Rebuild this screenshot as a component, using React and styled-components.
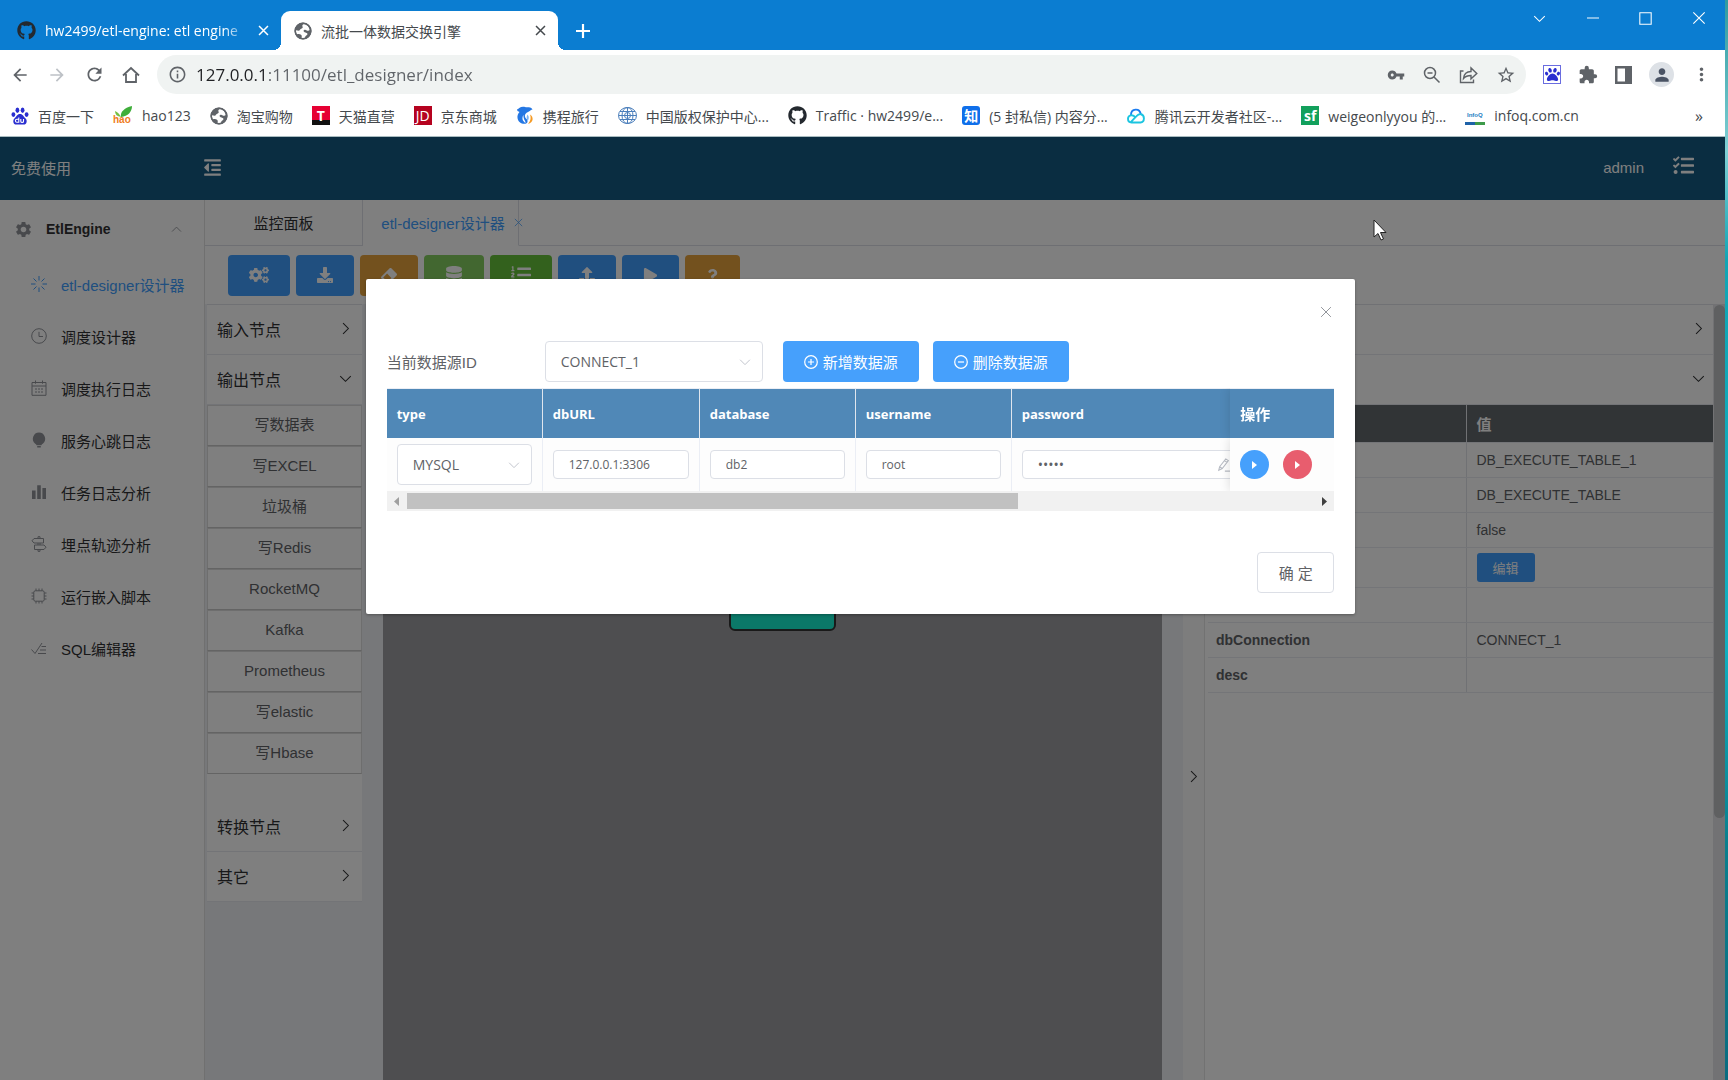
/* eslint-disable react/prop-types */
import { useState } from "react";
import styled, { createGlobalStyle } from "styled-components";
import {
  FaCogs,
  FaDatabase,
  FaDownload,
  FaEraser,
  FaGithub,
  FaListOl,
  FaOutdent,
  FaPaw,
  FaPlay,
  FaQuestion,
  FaTasks,
  FaUpload,
} from "react-icons/fa";
import {
  MdArrowBack,
  MdArrowForward,
  MdExtension,
  MdInfoOutline,
  MdMoreVert,
  MdPerson,
  MdRefresh,
  MdSettings,
  MdStarBorder,
  MdVpnKey,
} from "react-icons/md";

const GlobalStyle = createGlobalStyle`
  * {
    box-sizing: border-box;
  }
  body {
    margin: 0;
    font-family: "Liberation Sans", "Noto Sans CJK SC", sans-serif;
    font-size: 14px;
    color: #303133;
  }
  button, input, select {
    font: inherit;
    color: inherit;
    margin: 0;
  }
  button {
    border: none;
    padding: 0;
    background: none;
    cursor: pointer;
  }
  a {
    color: inherit;
    text-decoration: none;
  }
  svg {
    display: block;
    flex: none;
  }
`;

const uiFont = `"Open Sans", "Noto Sans CJK SC", sans-serif`;

const Desktop = styled.div`
  min-height: 100vh;
  display: flex;
  background: linear-gradient(
    #2f9aa0 0%,
    #7fcfd4 14%,
    #12a5b4 24%,
    #0fb0c0 60%,
    #0a7f8d 78%,
    #0b6c80 100%
  );
`;

const Window = styled.div`
  flex: 1;
  min-width: 0;
  margin-right: 3px;
  display: flex;
  flex-direction: column;
  background: #fff;
`;

/* browser chrome */

const TabStrip = styled.div`
  display: flex;
  align-items: flex-end;
  height: 50px;
  background: #0b7dd1;
  font-family: ${uiFont};
  color: #fff;
`;

const BrowserTab = styled.div`
  position: relative;
  display: flex;
  align-items: center;
  gap: 9px;
  width: ${(p) => (p.$active ? "277px" : "281px")};
  height: 39px;
  padding: 0 12px 0 ${(p) => (p.$active ? "13px" : "17px")};
  border-radius: 9px 9px 0 0;
  background: ${(p) => (p.$active ? "#fff" : "transparent")};
  color: ${(p) => (p.$active ? "#45494d" : "#fff")};
  &::before,
  &::after {
    content: ${(p) => (p.$active ? '""' : "none")};
    position: absolute;
    bottom: 0;
    width: 8px;
    height: 8px;
  }
  &::before {
    right: 100%;
    background: radial-gradient(circle at 0 0, transparent 8px, #fff 8px);
  }
  &::after {
    left: 100%;
    background: radial-gradient(circle at 100% 0, transparent 8px, #fff 8px);
  }
`;

const TabTitle = styled.span`
  flex: 1;
  overflow: hidden;
  white-space: nowrap;
  ${(p) =>
    !p.$active &&
    `font-weight: 500;
     mask-image: linear-gradient(90deg, #000 88%, transparent);`}
`;

const PlainButton = styled.button`
  display: grid;
  place-items: center;
`;

const NewTab = styled(PlainButton)`
  width: 50px;
  height: 39px;
`;

const WindowButtons = styled.div`
  display: flex;
  align-self: flex-start;
  margin-left: auto;
  button {
    width: 53px;
    height: 36px;
  }
`;

const AddressRow = styled.div`
  display: flex;
  align-items: center;
  height: 49px;
  padding: 0 13px 0 10px;
  gap: 17px;
  color: #5f6368;
`;

const NavButtons = styled.div`
  display: flex;
  gap: 17px;
`;

const Omnibox = styled.div`
  flex: 1;
  display: flex;
  align-items: center;
  gap: 18px;
  height: 39px;
  padding: 0 10px 0 11px;
  border-radius: 20px;
  background: #f0f3f2;
`;

/* host part is darker than the path */
const UrlInput = styled.input`
  flex: 1;
  min-width: 0;
  margin-left: -9px;
  border: none;
  outline: none;
  padding: 0;
  background: linear-gradient(90deg, #202124 72px, #5f6368 72px);
  background-clip: text;
  color: transparent;
  caret-color: #202124;
  font-family: ${uiFont};
  font-size: 17px;
`;

const ExtensionIcon = styled.span`
  display: grid;
  place-items: center;
  width: 18px;
  height: 19px;
  border: 1px solid #6a6de0;
  background: #fff;
  color: #2a2fd0;
`;

const Avatar = styled.span`
  display: grid;
  place-items: center;
  width: 25px;
  height: 25px;
  border-radius: 50%;
  background: #dde1e6;
  color: #4a5364;
`;

const BookmarkBar = styled.nav`
  display: flex;
  align-items: center;
  height: 38px;
  padding: 0 22px 4px 11px;
  gap: 19px;
  border-bottom: 1px solid #a9bcc0;
  font-family: ${uiFont};
  color: #45494d;
  white-space: nowrap;
`;

const Bookmark = styled.a`
  display: flex;
  align-items: center;
  gap: 9px;
`;

const Badge = styled.span`
  display: grid;
  place-items: center;
  width: 18px;
  height: 19px;
  line-height: 19px;
  font-size: 14px;
  font-weight: ${(p) => p.$weight || 700};
  border-radius: ${(p) => p.$radius || 0}px;
  background: ${(p) => p.$bg};
  color: #fff;
`;

const More = styled.span`
  margin-left: auto;
  font-size: 16px;
`;

/* application */

const AppArea = styled.div`
  position: relative;
  flex: 1;
  display: flex;
  flex-direction: column;
`;

const AppHeader = styled.header`
  display: flex;
  align-items: center;
  height: 63px;
  padding: 0 31px 2px 11px;
  background: #145b83;
  color: #fff;
`;

const Brand = styled.span`
  width: 192px;
  font-size: 15px;
`;

const UserName = styled.span`
  margin-left: auto;
  margin-right: 29px;
  font-size: 15px;
`;

const TaskButton = styled(PlainButton)`
  align-self: flex-start;
  height: 57px;
`;

const AppBody = styled.div`
  flex: 1;
  display: flex;
`;

const Sidebar = styled.nav`
  flex: none;
  width: 205px;
  border-right: 1px solid #e0e0e0;
`;

const MenuTitle = styled.button`
  display: flex;
  align-items: center;
  gap: 13px;
  width: 100%;
  height: 58px;
  padding: 0 22px 0 14px;
  font-weight: 700;
  svg {
    color: #909399;
  }
  svg:last-child {
    margin-left: auto;
  }
`;

const MenuItem = styled.a`
  display: flex;
  align-items: center;
  gap: 14px;
  height: 52px;
  padding-left: 31px;
  font-size: 15px;
  color: ${(p) => (p.$active ? "#409eff" : "#303133")};
  svg {
    color: ${(p) => (p.$active ? "#409eff" : "#909399")};
  }
`;

const Main = styled.main`
  flex: 1;
  min-width: 0;
  display: flex;
  flex-direction: column;
`;

const PageTabs = styled.div`
  display: flex;
  height: 46px;
  border-bottom: 1px solid #dcdfe6;
`;

const PageTab = styled.button`
  display: flex;
  align-items: center;
  justify-content: center;
  width: ${(p) => (p.$active ? "156px" : "158px")};
  height: 46px;
  border-right: 1px solid #dcdfe6;
  border-bottom: 1px solid ${(p) => (p.$active ? "#fff" : "#dcdfe6")};
  font-size: 15px;
  white-space: nowrap;
  color: ${(p) => (p.$active ? "#409eff" : "#303133")};
`;

const ActiveTabInner = styled.span`
  display: flex;
  align-items: center;
  gap: 9px;
  margin-right: -23px;
`;

const Toolbar = styled.div`
  display: flex;
  align-items: center;
  gap: 6px;
  height: 58px;
  padding: 0 23px;
`;

const ToolButton = styled.button`
  display: grid;
  place-items: center;
  height: 41px;
  padding: 0 21px;
  border-radius: 4px;
  background: ${(p) => p.$bg};
  color: #fff;
`;

const Workspace = styled.div`
  flex: 1;
  display: flex;
  padding-left: 2px;
  background: #eff1f5;
`;

const NodePanel = styled.section`
  flex: none;
  align-self: flex-start;
  width: 155px;
  background: #fff;
  border-top: 1px solid #e0e3e9;
`;

const FoldRow = styled.button`
  display: flex;
  align-items: center;
  justify-content: space-between;
  width: 100%;
  height: 50px;
  padding: 0 ${(p) => (p.$wide ? "8px" : "10px")} 2px 10px;
  border-bottom: 1px solid #e6e8ee;
  font-size: 16px;
`;

const NodeList = styled.ul`
  margin: 0 0 28px;
  padding: 0;
  list-style: none;
`;

const NodeItem = styled.li`
  height: 41px;
  line-height: 38px;
  border: 1px solid #dcdcdc;
  border-bottom-color: #c8c8c8;
  font-size: 15px;
  text-align: center;
  color: #606266;
`;

const Canvas = styled.div`
  position: relative;
  flex: 1;
  margin: 0 21px;
  background: #9c9da0;
`;

const FlowNode = styled.div`
  position: absolute;
  top: 270px;
  left: 346px;
  width: 107px;
  height: 57px;
  border: 2px solid #333;
  border-radius: 6px;
  background: #16f0d0;
`;

const Collapse = styled.button`
  flex: none;
  width: 21px;
  padding: 168px 0 0 4px;
  background: #fafafa;
`;

const Properties = styled.section`
  flex: none;
  width: 509px;
  padding-left: 3px;
  background: #fff;
  border-left: 1px solid #e4e4e4;
  border-top: 1px solid #e0e3e9;
`;

const PropTable = styled.table`
  width: 100%;
  border-collapse: collapse;
  table-layout: fixed;
  th,
  td {
    height: 35px;
    padding: 0 10px;
    text-align: left;
    border-bottom: 1px solid #e9ebf0;
  }
  th:first-child {
    width: 258px;
    padding-left: 8px;
    border-right: 1px solid #e0e3e9;
  }
  td {
    color: #606266;
  }
  tbody th {
    color: #606266;
  }
  thead th {
    height: 37px;
    background: #62686d;
    color: #fff;
    font-size: 15px;
  }
`;

const EditButton = styled.button`
  display: block;
  width: 58px;
  height: 29px;
  margin: 5px 0;
  border-radius: 3px;
  background: #409eff;
  color: #fff;
  font-size: 13px;
`;

const ScrollTrack = styled.div`
  flex: none;
  width: 12px;
  padding: 1px 0 0 1px;
  background: #e4e5e9;
`;

const ScrollThumb = styled.div`
  height: 513px;
  border-radius: 6px;
  background: #bfc0c2;
`;

/* dialog */

const Overlay = styled.div`
  position: absolute;
  inset: 0;
  display: flex;
  justify-content: center;
  align-items: flex-start;
  padding: 142px 4px 0 0;
  background: rgba(0, 0, 0, 0.5);
`;

const Dialog = styled.section`
  width: 57.5%;
  padding: 21px;
  border-radius: 2px;
  background: #fff;
  color: #606266;
  box-shadow: 0 1px 3px rgba(0, 0, 0, 0.3);
`;

const DialogHead = styled.div`
  display: flex;
  justify-content: flex-end;
  align-items: flex-start;
  height: 41px;
  padding: 6px 2px 0 0;
  color: #909399;
`;

const SourceRow = styled.div`
  display: flex;
  align-items: center;
  margin-bottom: 6px;
`;

const SourceLabel = styled.label`
  width: 158px;
  font-size: 15px;
`;

const SelectWrap = styled.span`
  display: grid;
  align-items: center;
  width: ${(p) => p.$width};
  svg {
    grid-area: 1 / 1;
    justify-self: end;
    margin-right: 12px;
    color: #c0c4cc;
    pointer-events: none;
  }
  select {
    grid-area: 1 / 1;
    appearance: none;
    height: 41px;
    padding: 0 15px;
    border: 1px solid #dcdfe6;
    border-radius: 4px;
    background: #fff;
    font-family: ${uiFont};
  }
`;

const PrimaryButton = styled.button`
  display: flex;
  align-items: center;
  gap: 5px;
  height: 41px;
  margin-left: ${(p) => p.$gap};
  padding: 0 21px;
  border-radius: 4px;
  background: #46a0fc;
  color: #fff;
  font-size: 15px;
`;

const TableBox = styled.div`
  overflow: hidden;
`;

const SourceTable = styled.table`
  width: 970px;
  min-width: 100%;
  border-collapse: separate;
  border-spacing: 0;
  table-layout: fixed;
  font-family: ${uiFont};
  th {
    height: 50px;
    padding: 0 10px;
    text-align: left;
    font-size: 13px;
    color: #fff;
    background: #5088b7;
    border-right: 1px solid #dfe6ee;
    border-top: 1px solid #ebeef5;
  }
  td {
    height: 53px;
    padding: 0 10px;
    border-right: 1px solid #ebeef5;
    background: #fdfdfd;
  }
  th:last-child,
  td:last-child {
    position: sticky;
    right: 0;
    border-right: none;
    box-shadow: 0 0 10px rgba(0, 0, 0, 0.14);
    clip-path: inset(0 0 0 -10px);
  }
  th:last-child {
    font-size: 15px;
  }
`;

const Field = styled.input`
  display: block;
  width: 100%;
  height: 29px;
  padding: 0 15px;
  border: 1px solid #dcdfe6;
  border-radius: 4px;
  outline: none;
  background: #fff;
  font-size: ${(p) => (p.type === "password" ? "14px" : "12px")};
  color: #606266;
`;

const PasswordWrap = styled.span`
  display: grid;
  align-items: center;
  input,
  svg {
    grid-area: 1 / 1;
  }
  svg {
    justify-self: end;
    margin-right: 11px;
    color: #b8bcc4;
  }
`;

const RowActions = styled.div`
  display: flex;
  gap: 14px;
`;

const RoundButton = styled.button`
  display: grid;
  place-items: center;
  width: 29px;
  height: 29px;
  border-radius: 50%;
  background: ${(p) => p.$bg};
  color: #fff;
`;

const HScroll = styled.div`
  display: flex;
  align-items: center;
  height: 20px;
  padding: 0 7px;
  background: #f1f1f1;
`;

const HTrack = styled.div`
  flex: 1;
  height: 16px;
  margin: 0 8px;
`;

const HThumb = styled.div`
  width: 67.4%;
  height: 100%;
  background: #c1c1c1;
`;

const DialogFoot = styled.div`
  display: flex;
  justify-content: flex-end;
  margin-top: 41px;
`;

const ConfirmButton = styled.button`
  width: 77px;
  height: 41px;
  border: 1px solid #dcdfe6;
  border-radius: 4px;
  background: #fff;
  font-size: 15px;
`;

const Pointer = styled.svg`
  position: absolute;
  top: 82px;
  left: 1373px;
`;

/* icons */

function Line({ size = 16, box = 16, width = 1, d, children, ...rest }) {
  return (
    <svg
      width={size}
      height={size}
      viewBox={`0 0 ${box} ${box}`}
      fill="none"
      stroke="currentColor"
      strokeWidth={width}
      aria-hidden="true"
      {...rest}
    >
      {d && <path d={d} />}
      {children}
    </svg>
  );
}

const Chevron = ({ dir, size = 13 }) => {
  const paths = {
    right: "M5 1.5 11.5 8 5 14.5",
    down: "M1.5 5 8 11.5 14.5 5",
    up: "M1.5 11 8 4.5 14.5 11",
  };
  return <Line size={size} width={1.3} d={paths[dir]} />;
};

const Cross = ({ size = 12, width = 1.3 }) => (
  <Line size={size} width={width} d="M1.5 1.5l13 13M14.5 1.5l-13 13" />
);

const SpinnerIcon = () => (
  <Line d="M8 0v4.5M8 11.500v4.500M0 8h4.500M11.500 8H16M2.500 2.500l3 3M10.500 10.500l3 3M2.500 13.500l3-3M10.500 5.500l3-3" />
);

const ClockIcon = () => (
  <Line>
    <circle cx="8" cy="8" r="7.3" />
    <path d="M8 3.8V8.5h4" />
  </Line>
);

const CalendarIcon = () => (
  <Line>
    <path d="M1 2.5h14v12.8H1zM1 6h14M4.5.5v3.2M11.5.5v3.2" />
    <path d="M4 9h8M4 12h8" strokeDasharray="2 1" />
  </Line>
);

const BulbIcon = () => (
  <Line stroke="none" fill="currentColor">
    <path d="M8 .5a6.300 6.300 0 0 1 3.800 11.200c-.7.5-1.300.8-1.300 1.500h-5c0-.7-.6-1-1.300-1.500A6.300 6.300 0 0 1 8 .5zM6.200 14h3.600v1.500H6.200z" />
  </Line>
);

const BarsIcon = () => (
  <Line stroke="none" fill="currentColor">
    <path d="M1 6.5h3.6V15H1zM6.200 1.200h3.600V15H6.200zM11.400 4H15v11h-3.600z" />
  </Line>
);

const SignIcon = () => (
  <Line>
    <path d="M7 2.5V.7h2v1.8M7 7v2M9 7v2M7 13.5v1.8h2v-1.8M3 2.5h9.5v4.5H3L1 4.8zM3.5 9H13l2 2.2-2 2.3H3.5z" />
  </Line>
);

const ChipIcon = () => (
  <Line>
    <rect x="2.8" y="2.8" width="10.4" height="10.4" rx="1.5" />
    <path d="M5 .5v2.3M8 .5v2.3M11 .5v2.3M5 13.2v2.3M8 13.2v2.3M11 13.2v2.3M.5 5h2.3M.5 8h2.3M.5 11h2.3M13.2 5h2.3M13.2 8h2.3M13.2 11h2.3" />
  </Line>
);

const FinishIcon = () => (
  <Line d="M.5 9.5 4 13.5 11 3M10.5 6.5H15M9 10h6M7 13.5h8" />
);

const GlobeIcon = () => (
  <svg width="18" height="18" viewBox="0 0 18 18" aria-hidden="true">
    <circle cx="9" cy="9" r="8.500" fill="#5f6368" />
    <path
      fill="#fff"
      d="M10 2c-1.500.6-2 1.500-1.500 2.600.8 1.500-.5 2-1.700 2.300C5.600 7.200 6 8.500 4.800 8.700L2 8.300c-.2 1.500.3 3 1 4 1.500-.6 3-.5 4 .4 1.200 1 .8 2 .4 3 1 .4 2.500.3 3.600 0 .2-1.600 1-2 2-2.700.7-.6.6-1.700-.4-2-1.600-.5-2.600-.7-3-1.700-.3-1 .8-1.600 2-1.400 1.200.2 1.500 1 2.700.8l1.500-.6C15.400 5 13 2.500 10 2z"
    />
    <circle cx="9" cy="9" r="7.800" fill="none" stroke="#5f6368" strokeWidth="1.500" />
  </svg>
);

const ZoomOutIcon = () => (
  <Line size={18} box={18} width={1.5}>
    <circle cx="7" cy="7" r="5.500" />
    <path d="M11 11l5.500 5.500M4.500 7h5" />
  </Line>
);

const HomeIcon = () => (
  <Line size={18} box={18} width={1.8} d="M1 9.5 9 2l8 7.5M4 8v8h10V8" />
);

const ShareIcon = () => (
  <Line size={19} box={19} width={1.400}>
    <path d="M4.500 6H1.500v11.500h13v-3" />
    <path d="M4.500 13.500c.5-4.500 3-7 7.500-7V3l5.800 5.500L12 13.800v-3.300c-3.500 0-5.500.7-7.500 3z" />
  </Line>
);

const SidePanelIcon = () => (
  <svg width="17" height="18" viewBox="0 0 17 18" aria-hidden="true">
    <path
      fill="#5f6368"
      fillRule="evenodd"
      d="M0 0h17v18H0zM2.5 2.5v13H10v-13z"
    />
  </svg>
);

const PencilIcon = () => (
  <Line size={14} width={1.2} d="M2 14l1-4 7-9 3 2-7 9-4 2zM8.5 3l3 2M3 10l3 2M9 15h6" />
);

const BaiduIcon = () => (
  <svg width="18" height="18" viewBox="0 0 18 18" aria-hidden="true">
    <g fill="#2a2fd0">
      <ellipse cx="6.4" cy="3.2" rx="1.9" ry="2.7" />
      <ellipse cx="11.6" cy="3.2" rx="1.9" ry="2.7" />
      <ellipse cx="2.4" cy="7.6" rx="1.9" ry="2.4" />
      <ellipse cx="15.6" cy="7.6" rx="1.9" ry="2.4" />
      <path d="M9 7c3 0 3.4 2.5 5.6 4.4 2 1.8 1.3 6.1-1.9 6.1H5.3c-3.2 0-3.9-4.3-1.9-6.1C5.6 9.5 6 7 9 7z" />
    </g>
    <path
      d="M7.8 10.5v4.8H5.9a1.3 1.3 0 0 1 0-3h1.9M9.8 12v2.4c0 1.3 2.7 1.3 2.7 0V12"
      fill="none"
      stroke="#fff"
      strokeWidth="1.1"
    />
  </svg>
);

const SproutIcon = () => (
  <svg width="20" height="20" viewBox="0 0 20 20" aria-hidden="true">
    <path fill="#3fae3a" d="M8 11C7 6 11 2 19 0c0 6-4 10-11 11z" />
    <path fill="#76c043" d="M8 11C6.5 8 4.5 6 2 5c0 3.5 2 5.5 6 6z" />
    <text
      x="0"
      y="17"
      fontFamily="Liberation Sans"
      fontSize="10"
      fontWeight="700"
      fill="#ef7d22"
    >
      hao
    </text>
  </svg>
);

const DolphinIcon = () => (
  <svg width="18" height="19" viewBox="0 0 18 19" aria-hidden="true">
    <path
      fill="#2577e3"
      d="M1 3.500C3 2.500 4 1 7 .8c2 0 3 .8 5 .4 2.500-.3 4 .8 4.500 2.300-1.500 0-2 1.200-4 2.200-3 1.200-4 3-3.500 5 .5 2 2 2 2.500 4 .3 1.500-.5 2.500-2 3C6 18.500 2 16 1.500 12c-.3-2.500.5-4.500 2-6C2.500 5.500 1 5 1 3.500z"
    />
    <path fill="#f59a23" d="M14 8.500c4 2.500 3.500 8-2 9.500 2-2.500 3.500-5 2-9.500z" />
    <path fill="#fff" d="M7.500 9c-2 3-1 6 2 8 .5-2-2.500-3.500-2-8z" />
    <path fill="#7db4f5" d="M11.500 8.500c2 2.500 1.500 4.500 0 6.500-.5-2-1.500-3.500 0-6.500z" />
  </svg>
);

const CopyrightGlobe = () => (
  <Line size={19} box={19} stroke="#4a7ebb">
    <ellipse cx="9.500" cy="9.500" rx="9" ry="8" />
    <ellipse cx="9.500" cy="9.500" rx="5.500" ry="8" />
    <path d="M.5 9.500h18M2 5.500h15M2 13.500h15M9.500 1.500v16" />
    <circle cx="9.500" cy="9.500" r="3" />
  </Line>
);

const CloudIcon = () => (
  <svg width="19" height="16" viewBox="0 0 19 16" fill="none" aria-hidden="true">
    <path
      stroke="#1b7cf0"
      strokeWidth="1.900"
      d="M4 7C4 .5 12.500-.5 13.800 6.200"
    />
    <path
      stroke="#1cc5e0"
      strokeWidth="1.900"
      d="M8.500 9.500C6 6 1 7 1 10.800 1 13 2.500 14.500 4.500 14.500h9c4.500-.3 4.500-7.500.3-8.300-2-.3-3.200.8-4.300 2L4 13.800"
    />
  </svg>
);

const InfoqIcon = () => (
  <svg width="20" height="20" viewBox="0 0 20 20" aria-hidden="true">
    <text
      x="2"
      y="11"
      fontFamily="Liberation Sans"
      fontSize="6"
      fontWeight="700"
      fill="#1d7fc4"
    >
      InfoQ
    </text>
    <path fill="#1e62a8" d="M0 16h10v3H0z" />
    <path fill="#3d9b4a" d="M10 16h10v3H10z" />
  </svg>
);

const bookmarks = [
  { label: "百度一下", icon: <BaiduIcon /> },
  { label: "hao123", icon: <SproutIcon /> },
  { label: "淘宝购物", icon: <GlobeIcon /> },
  {
    label: "天猫直营",
    icon: <Badge $bg="linear-gradient(#e60033 75%, #111 75%)">T</Badge>,
  },
  { label: "京东商城", icon: <Badge $bg="#b5021f" $weight={400}>JD</Badge> },
  { label: "携程旅行", icon: <DolphinIcon /> },
  { label: "中国版权保护中心...", icon: <CopyrightGlobe /> },
  { label: "Traffic · hw2499/e...", icon: <FaGithub size={19} color="#24292f" /> },
  { label: "(5 封私信) 内容分...", icon: <Badge $bg="#0f6fea" $radius={3}>知</Badge> },
  { label: "腾讯云开发者社区-...", icon: <CloudIcon /> },
  { label: "weigeonlyyou 的...", icon: <Badge $bg="#12a05c">sf</Badge> },
  { label: "infoq.com.cn", icon: <InfoqIcon /> },
];

const menu = [
  { label: "etl-designer设计器", icon: <SpinnerIcon />, active: true },
  { label: "调度设计器", icon: <ClockIcon /> },
  { label: "调度执行日志", icon: <CalendarIcon /> },
  { label: "服务心跳日志", icon: <BulbIcon /> },
  { label: "任务日志分析", icon: <BarsIcon /> },
  { label: "埋点轨迹分析", icon: <SignIcon /> },
  { label: "运行嵌入脚本", icon: <ChipIcon /> },
  { label: "SQL编辑器", icon: <FinishIcon /> },
];

const tools = [
  { name: "settings", bg: "#409eff", icon: <FaCogs size={20} /> },
  { name: "download", bg: "#409eff", icon: <FaDownload size={16} /> },
  { name: "clear", bg: "#e6a23c", icon: <FaEraser size={16} /> },
  { name: "data source", bg: "#85ce61", icon: <FaDatabase size={18} /> },
  { name: "list", bg: "#67c23a", icon: <FaListOl size={20} /> },
  { name: "upload", bg: "#409eff", icon: <FaUpload size={16} /> },
  { name: "run", bg: "#409eff", icon: <FaPlay size={15} /> },
  { name: "help", bg: "#e6a23c", icon: <FaQuestion size={13} /> },
];

const outputNodes = [
  "写数据表",
  "写EXCEL",
  "垃圾桶",
  "写Redis",
  "RocketMQ",
  "Kafka",
  "Prometheus",
  "写elastic",
  "写Hbase",
];

const properties = [
  ["id", "DB_EXECUTE_TABLE_1"],
  ["type", "DB_EXECUTE_TABLE"],
  ["debug", "false"],
  ["script", <EditButton key="edit">编辑</EditButton>],
  ["fields", ""],
  ["dbConnection", "CONNECT_1"],
  ["desc", ""],
];

function BrowserChrome() {
  return (
    <>
      <TabStrip>
        <BrowserTab>
          <FaGithub size={19} color="#24292f" />
          <TabTitle>hw2499/etl-engine: etl engine</TabTitle>
          <PlainButton aria-label="Close tab">
            <Cross size={11} width={2.2} />
          </PlainButton>
        </BrowserTab>
        <BrowserTab $active>
          <GlobeIcon />
          <TabTitle $active>流批一体数据交换引擎</TabTitle>
          <PlainButton aria-label="Close tab">
            <Cross size={11} width={2.2} />
          </PlainButton>
        </BrowserTab>
        <NewTab aria-label="New tab">
          <Line size={14} width={2.5} d="M8 0v16M0 8h16" />
        </NewTab>
        <WindowButtons>
          <PlainButton aria-label="Search tabs">
            <Chevron dir="down" size={13} />
          </PlainButton>
          <PlainButton aria-label="Minimize">
            <Line size={12} width={1.3} d="M0 8h16" />
          </PlainButton>
          <PlainButton aria-label="Maximize">
            <Line size={13} width={1.3} d="M1 1h14v14H1z" />
          </PlainButton>
          <PlainButton aria-label="Close window">
            <Cross size={14} />
          </PlainButton>
        </WindowButtons>
      </TabStrip>
      <AddressRow>
        <NavButtons>
          <PlainButton aria-label="Back">
            <MdArrowBack size={20} />
          </PlainButton>
          <PlainButton aria-label="Forward">
            <MdArrowForward size={20} color="#bdc1c6" />
          </PlainButton>
          <PlainButton aria-label="Reload">
            <MdRefresh size={21} />
          </PlainButton>
          <PlainButton aria-label="Home">
            <HomeIcon />
          </PlainButton>
        </NavButtons>
        <Omnibox>
          <MdInfoOutline size={19} />
          <UrlInput
            aria-label="Address"
            defaultValue="127.0.0.1:11100/etl_designer/index"
          />
          <MdVpnKey size={18} />
          <ZoomOutIcon />
          <ShareIcon />
          <MdStarBorder size={20} />
        </Omnibox>
        <ExtensionIcon>
          <FaPaw size={15} />
        </ExtensionIcon>
        <MdExtension size={20} />
        <SidePanelIcon />
        <Avatar>
          <MdPerson size={20} />
        </Avatar>
        <PlainButton aria-label="Menu">
          <MdMoreVert size={21} />
        </PlainButton>
      </AddressRow>
      <BookmarkBar>
        {bookmarks.map((b) => (
          <Bookmark href="#" key={b.label}>
            {b.icon}
            {b.label}
          </Bookmark>
        ))}
        <More>»</More>
      </BookmarkBar>
    </>
  );
}

function SourceDialog({ onClose }) {
  const columns = ["type", "dbURL", "database", "username", "password"];

  return (
    <Overlay>
      <Dialog role="dialog">
        <DialogHead>
          <PlainButton aria-label="Close" onClick={onClose}>
            <Cross />
          </PlainButton>
        </DialogHead>
        <SourceRow>
          <SourceLabel htmlFor="source">当前数据源ID</SourceLabel>
          <SelectWrap $width="218px">
            <select id="source">
              <option>CONNECT_1</option>
            </select>
            <Chevron dir="down" size={12} />
          </SelectWrap>
          <PrimaryButton $gap="20px">
            <Line size={14} width={1.4}>
              <circle cx="8" cy="8" r="7.2" />
              <path d="M8 4.5v7M4.5 8h7" />
            </Line>
            新增数据源
          </PrimaryButton>
          <PrimaryButton $gap="14px">
            <Line size={14} width={1.4}>
              <circle cx="8" cy="8" r="7.2" />
              <path d="M4.5 8h7" />
            </Line>
            删除数据源
          </PrimaryButton>
        </SourceRow>
        <TableBox>
          <SourceTable>
            <colgroup>
              <col width="156" />
              <col width="157" />
              <col width="156" />
              <col width="156" />
              <col />
              <col width="104" />
            </colgroup>
            <thead>
              <tr>
                {columns.map((c) => (
                  <th key={c}>{c}</th>
                ))}
                <th>操作</th>
              </tr>
            </thead>
            <tbody>
              <tr>
                <td>
                  <SelectWrap $width="100%">
                    <select aria-label="type">
                      <option>MYSQL</option>
                    </select>
                    <Chevron dir="down" size={12} />
                  </SelectWrap>
                </td>
                <td>
                  <Field aria-label="dbURL" defaultValue="127.0.0.1:3306" />
                </td>
                <td>
                  <Field aria-label="database" defaultValue="db2" />
                </td>
                <td>
                  <Field aria-label="username" defaultValue="root" />
                </td>
                <td>
                  <PasswordWrap>
                    <Field
                      type="password"
                      aria-label="password"
                      defaultValue="12345"
                    />
                    <PencilIcon />
                  </PasswordWrap>
                </td>
                <td>
                  <RowActions>
                    <RoundButton $bg="#46a0fc" aria-label="Test">
                      <svg width="5" height="8" viewBox="0 0 5 8">
                        <path d="M0 0l5 4-5 4z" fill="currentColor" />
                      </svg>
                    </RoundButton>
                    <RoundButton $bg="#e85d6e" aria-label="Remove">
                      <svg width="5" height="8" viewBox="0 0 5 8">
                        <path d="M0 0l5 4-5 4z" fill="currentColor" />
                      </svg>
                    </RoundButton>
                  </RowActions>
                </td>
              </tr>
            </tbody>
          </SourceTable>
        </TableBox>
        <HScroll>
          <svg width="5" height="9" viewBox="0 0 5 9">
            <path d="M5 0v9L0 4.5z" fill="#a0a0a0" />
          </svg>
          <HTrack>
            <HThumb />
          </HTrack>
          <svg width="5" height="9" viewBox="0 0 5 9">
            <path d="M0 0v9l5-4.5z" fill="#404040" />
          </svg>
        </HScroll>
        <DialogFoot>
          <ConfirmButton onClick={onClose}>确 定</ConfirmButton>
        </DialogFoot>
      </Dialog>
    </Overlay>
  );
}

function App() {
  const [open, setOpen] = useState(true);

  return (
    <Desktop>
      <GlobalStyle />
      <Window>
        <BrowserChrome />
        <AppArea>
          <AppHeader>
            <Brand>免费使用</Brand>
            <PlainButton aria-label="Collapse menu">
              <FaOutdent size={19} />
            </PlainButton>
            <UserName>admin</UserName>
            <TaskButton aria-label="Tasks">
              <FaTasks size={21} />
            </TaskButton>
          </AppHeader>
          <AppBody>
            <Sidebar>
              <MenuTitle>
                <MdSettings size={19} />
                EtlEngine
                <Chevron dir="up" size={11} />
              </MenuTitle>
              {menu.map((m) => (
                <MenuItem href="#" key={m.label} $active={m.active}>
                  {m.icon}
                  {m.label}
                </MenuItem>
              ))}
            </Sidebar>
            <Main>
              <PageTabs>
                <PageTab>监控面板</PageTab>
                <PageTab $active>
                  <ActiveTabInner>
                    etl-designer设计器
                    <Cross size={9} />
                  </ActiveTabInner>
                </PageTab>
              </PageTabs>
              <Toolbar>
                {tools.map((t) => (
                  <ToolButton key={t.name} $bg={t.bg} aria-label={t.name}>
                    {t.icon}
                  </ToolButton>
                ))}
              </Toolbar>
              <Workspace>
                <NodePanel>
                  <FoldRow>
                    输入节点 <Chevron dir="right" />
                  </FoldRow>
                  <FoldRow>
                    输出节点 <Chevron dir="down" />
                  </FoldRow>
                  <NodeList>
                    {outputNodes.map((n) => (
                      <NodeItem key={n}>{n}</NodeItem>
                    ))}
                  </NodeList>
                  <FoldRow>
                    转换节点 <Chevron dir="right" />
                  </FoldRow>
                  <FoldRow>
                    其它 <Chevron dir="right" />
                  </FoldRow>
                </NodePanel>
                <Canvas>
                  <FlowNode />
                </Canvas>
                <Collapse aria-label="Collapse properties">
                  <Chevron dir="right" />
                </Collapse>
                <Properties>
                  <FoldRow $wide aria-label="Basic">
                    <span /> <Chevron dir="right" />
                  </FoldRow>
                  <FoldRow $wide aria-label="Attributes">
                    <span /> <Chevron dir="down" />
                  </FoldRow>
                  <PropTable>
                    <thead>
                      <tr>
                        <th>属性</th>
                        <th>值</th>
                      </tr>
                    </thead>
                    <tbody>
                      {properties.map(([key, value]) => (
                        <tr key={key}>
                          <th>{key}</th>
                          <td>{value}</td>
                        </tr>
                      ))}
                    </tbody>
                  </PropTable>
                </Properties>
                <ScrollTrack>
                  <ScrollThumb />
                </ScrollTrack>
              </Workspace>
            </Main>
          </AppBody>
          {open && <SourceDialog onClose={() => setOpen(false)} />}
          <Pointer width="14" height="22" viewBox="0 0 14 22" aria-hidden="true">
            <path
              d="M1 1v17l4-3.5 3 6.5 2.5-1-3-6.5H13z"
              fill="#fff"
              stroke="#222"
            />
          </Pointer>
        </AppArea>
      </Window>
    </Desktop>
  );
}

export default App;
